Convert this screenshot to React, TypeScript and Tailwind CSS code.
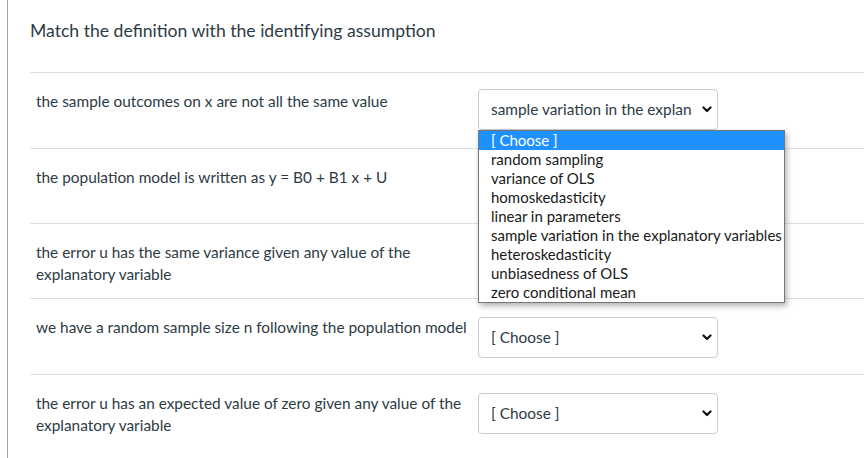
import React from "react";

type Row = { text: string; value: string; height: string; selectTop: string; open?: boolean };

const rows: Row[] = [
  { text: "the sample outcomes on x are not all the same value", value: "sample variation in the explanatory variables", height: "h-[76px]", selectTop: "mt-[16px]", open: true },
  { text: "the population model is written as y = B0 + B1 x + U", value: "[ Choose ]", height: "h-[75px]", selectTop: "mt-[17px]" },
  { text: "the error u has the same variance given any value of the explanatory variable", value: "[ Choose ]", height: "h-[75px]", selectTop: "mt-[17px]" },
  { text: "we have a random sample size n following the population model", value: "[ Choose ]", height: "h-[76px]", selectTop: "mt-[18px]" },
  { text: "the error u has an expected value of zero given any value of the explanatory variable", value: "[ Choose ]", height: "h-[80px]", selectTop: "mt-[18px]" },
];

const options = [
  "[ Choose ]",
  "random sampling",
  "variance of OLS",
  "homoskedasticity",
  "linear in parameters",
  "sample variation in the explanatory variables",
  "heteroskedasticity",
  "unbiasedness of OLS",
  "zero conditional mean",
];

function Chevron() {
  return (
    <svg width="10" height="7" viewBox="0 0 10 7" className="ml-[10px] shrink-0">
      <path d="M1.5 1.5 L5 5 L8.5 1.5" fill="none" stroke="#111" strokeWidth="2.2" strokeLinecap="round" strokeLinejoin="round" />
    </svg>
  );
}

function FakeSelect({ value, open, className }: { value: string; open?: boolean; className: string }) {
  return (
    <div className={`relative ${className}`}>
      <div className="flex h-[41px] w-[240px] items-center rounded-[4px] border border-[#c7cdd1] bg-white pl-[12px] pr-[5px]">
        <span className="min-w-0 flex-1 overflow-hidden whitespace-nowrap">{value}</span>
        <Chevron />
      </div>
      {open && (
        <ul className="absolute left-0 top-[41px] z-10 w-[307px] border border-[#767676] bg-white text-[15px] shadow-[2px_3px_6px_rgba(0,0,0,0.3)]">
          {options.map((opt, i) => (
            <li
              key={opt}
              className={`h-[19px] whitespace-nowrap pl-[12px] leading-[18px] ${i === 0 ? "bg-[#1e90ff] text-white" : "text-[#1a1a1a]"}`}
            >
              {opt}
            </li>
          ))}
        </ul>
      )}
    </div>
  );
}

export default function App() {
  return (
    <div className="min-h-[458px] bg-white pl-[7px] text-[15.4px] text-[#2d3b45]" style={{ fontFamily: "Lato, 'Open Sans', sans-serif" }}>
      <div className="min-h-[458px] border-l border-[#a5a5a5] pl-[22px]">
        <h1 className="h-[72px] pt-[19px] text-[17.6px] leading-[24px] text-[#2d3b45]">
          Match the definition with the identifying assumption
        </h1>
        <div>
          {rows.map((row) => (
            <div key={row.text} className={`flex items-start border-t border-[#dcdfe1] pl-[6px] ${row.height}`}>
              <div className="w-[442px] pr-[8px] pt-[17px] leading-[22px]">{row.text}</div>
              <FakeSelect value={row.value} open={row.open} className={row.selectTop} />
            </div>
          ))}
        </div>
      </div>
    </div>
  );
}
